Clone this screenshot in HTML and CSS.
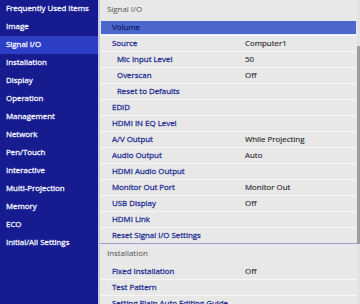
FILE: index.html
```html
<!DOCTYPE html>
<html lang="en">
<head>
    <meta charset="UTF-8">
    <meta name="viewport" content="width=device-width, initial-scale=1.0">
    <title>Signal I/O</title>
    <link rel="stylesheet" href="styles.css">
</head>
<body>
    <div class="screen">
        <!-- main menu -->
        <nav class="menu">
            <div class="menu-item">Frequently Used Items</div>
            <div class="menu-item">Image</div>
            <div class="menu-item active">Signal I/O</div>
            <div class="menu-item">Installation</div>
            <div class="menu-item">Display</div>
            <div class="menu-item">Operation</div>
            <div class="menu-item">Management</div>
            <div class="menu-item">Network</div>
            <div class="menu-item">Pen/Touch</div>
            <div class="menu-item">Interactive</div>
            <div class="menu-item">Multi-Projection</div>
            <div class="menu-item">Memory</div>
            <div class="menu-item">ECO</div>
            <div class="menu-item">Initial/All Settings</div>
        </nav>

        <!-- settings list -->
        <div class="panel">
            <div class="list">
                <div class="group-title">Signal I/O</div>
                <div class="row selected"><span class="label">Volume</span><span class="value"></span></div>
                <div class="row"><span class="label">Source</span><span class="value">Computer1</span></div>
                <div class="row sub"><span class="label">Mic Input Level</span><span class="value">50</span></div>
                <div class="row sub"><span class="label">Overscan</span><span class="value">Off</span></div>
                <div class="row sub"><span class="label">Reset to Defaults</span><span class="value"></span></div>
                <div class="row"><span class="label">EDID</span><span class="value"></span></div>
                <div class="row"><span class="label">HDMI IN EQ Level</span><span class="value"></span></div>
                <div class="row"><span class="label">A/V Output</span><span class="value">While Projecting</span></div>
                <div class="row"><span class="label">Audio Output</span><span class="value">Auto</span></div>
                <div class="row"><span class="label">HDMI Audio Output</span><span class="value"></span></div>
                <div class="row"><span class="label">Monitor Out Port</span><span class="value">Monitor Out</span></div>
                <div class="row"><span class="label">USB Display</span><span class="value">Off</span></div>
                <div class="row"><span class="label">HDMI Link</span><span class="value"></span></div>
                <div class="row last"><span class="label">Reset Signal I/O Settings</span><span class="value"></span></div>
                <div class="group-title">Installation</div>
                <div class="row"><span class="label">Fixed Installation</span><span class="value">Off</span></div>
                <div class="row"><span class="label">Test Pattern</span><span class="value"></span></div>
                <div class="row"><span class="label">Setting Plain Auto Editing Guide</span><span class="value"></span></div>
            </div>
            <div class="scrollbar"><div class="thumb"></div></div>
        </div>
    </div>
</body>
</html>
```

FILE: styles.css
```css
body {
    margin: 0;
    font-family: "Open Sans", "Noto Sans", sans-serif;
    font-size: 7.9px;
    background: #e8e8e8;
}
.screen {
    display: flex;
    width: 360px;
    height: 304px;
    overflow: hidden;
}

/* left menu */
.menu {
    width: 98px;
    flex-shrink: 0;
    background: #161b8f;
    border-right: 2px solid #c9cbe2;
}
.menu-item {
    height: 18px;
    line-height: 17px;
    padding-left: 6px;
    color: #f2f3ff;
    -webkit-text-stroke: 0.3px #f2f3ff;
    white-space: nowrap;
}
.menu-item.active {
    background: #2d3ec6;
}

/* right panel */
.panel {
    flex: 1;
    display: flex;
    background: #e8e8e8;
}
.list {
    flex: 1;
}
.group-title {
    height: 20px;
    line-height: 19px;
    padding-left: 7px;
    color: #505050;
}
.row {
    display: flex;
    height: 15px;
    line-height: 15px;
    border-bottom: 1px solid #f7f7f7;
    white-space: nowrap;
}
.row .label {
    width: 133px;
    padding-left: 12px;
    color: #2b3596;
    -webkit-text-stroke: 0.3px #2b3596;
}
.row.sub .label {
    width: 128px;
    padding-left: 17px;
}
.row .value {
    color: #2a2a2a;
    -webkit-text-stroke: 0.15px #2a2a2a;
}
.row.selected {
    background: #4d68cc;
    box-shadow: inset 0 0 0 1px #e4e8f8;
}
.row.selected .label {
    color: #16237a;
    -webkit-text-stroke: 0.3px #16237a;
}
.row.last {
    border-bottom: 1px solid #9aa0cf;
}
.scrollbar {
    width: 3px;
    background: #e2e2e2;
}
.thumb {
    margin-top: 46px;
    height: 198px;
    background: #9c9c9c;
}
```
